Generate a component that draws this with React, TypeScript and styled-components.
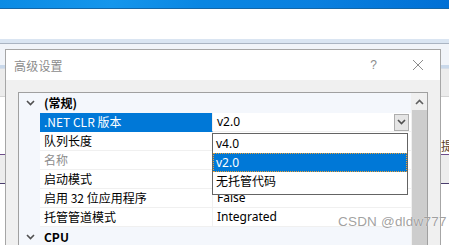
import styled, { createGlobalStyle } from 'styled-components'

const GlobalStyle = createGlobalStyle`
	html, body {
		margin: 0;
		padding: 0;
		background: #ffffff;
	}
	body {
		font-family: 'Noto Sans CJK SC', 'Noto Sans', sans-serif;
		font-size: 12px;
		color: #000;
	}
`

type PropRow = {
	name: string
	value: string
	disabled?: boolean
	selected?: boolean
}

// values of rows 2-4 sit under the open drop list, so they are left blank
const rows: PropRow[] = [
	{ name: '.NET CLR 版本', value: 'v2.0', selected: true },
	{ name: '队列长度', value: '' },
	{ name: '名称', value: '', disabled: true },
	{ name: '启动模式', value: '' },
	{ name: '启用 32 位应用程序', value: 'False' },
	{ name: '托管管道模式', value: 'Integrated' },
]

const options = ['v4.0', 'v2.0', '无托管代码']

function Chevron({ up }: { up?: boolean }) {
	return (
		<svg width='9' height='6' viewBox='0 0 9 6'>
			<polyline
				points={up ? '1,5 4.5,1.5 8,5' : '1,1 4.5,4.5 8,1'}
				fill='none'
				stroke={up ? '#606060' : '#505050'}
				strokeWidth='1.6'
			/>
		</svg>
	)
}

export default function App() {
	return (
		<Screen>
			<GlobalStyle />
			<TaskBar />
			<Ribbon />
			<RibbonEdge />
			<BackLane />
			<BackLine />
			<BackToolbar />
			<BackContent>
				<BackText>提</BackText>
			</BackContent>
			<BackStrip />
			<BackFoot />

			<Dialog>
				<TitleBar>
					<Title>高级设置</Title>
					<TitleButtons>
						<HelpMark>?</HelpMark>
						<svg width='12' height='12' viewBox='0 0 12 12'>
							<path d='M1 1 L11 11 M11 1 L1 11' stroke='#8c8c8c' strokeWidth='1' />
						</svg>
					</TitleButtons>
				</TitleBar>
				<Body>
					<Grid>
						<RowsArea>
							<CategoryRow>
								<Margin>
									<Chevron />
								</Margin>
								<CategoryLabel>(常规)</CategoryLabel>
							</CategoryRow>
							{rows.map((r) => (
								<Row key={r.name}>
									<Margin />
									<NameCell $selected={r.selected} $disabled={r.disabled}>
										{r.name}
									</NameCell>
									<ValueCell>
										{r.selected ? (
											<>
												<ComboText>{r.value}</ComboText>
												<ComboButton>
													<Chevron />
												</ComboButton>
												<DropList>
													{options.map((o) => (
														<DropItem key={o} $active={o === r.value}>
															{o}
														</DropItem>
													))}
												</DropList>
											</>
										) : (
											r.value
										)}
									</ValueCell>
								</Row>
							))}
							<CategoryRow>
								<Margin>
									<Chevron />
								</Margin>
								<CategoryLabel>CPU</CategoryLabel>
							</CategoryRow>
						</RowsArea>
						<ScrollBar>
							<ScrollArrow>
								<Chevron up />
							</ScrollArrow>
							<ScrollThumb />
						</ScrollBar>
					</Grid>
				</Body>
			</Dialog>
			<Watermark>CSDN @dldw777</Watermark>
		</Screen>
	)
}

const Screen = styled.div`
	position: relative;
	width: 449px;
	height: 245px;
	overflow: hidden;
	background: #ffffff;
`
const TaskBar = styled.div`
	height: 8px;
	background: linear-gradient(100deg, #0b8be4 0%, #1596ec 25%, #0a86e2 45%, #0a80df 70%, #0070d5 100%);
	border-bottom: 1px solid #1467a8;
`
const Ribbon = styled.div`
	height: 30px;
	background: #ffffff;
`
const RibbonEdge = styled.div`
	height: 4px;
	background: #dae5f2;
	border-bottom: 1px solid #aab4c2;
`
const BackLane = styled.div`
	height: 21px;
	background: #f1f4f9;
`
const BackLine = styled.div`
	height: 3px;
	background: #c9d8ea;
	border-bottom: 1px solid #d7dee8;
`
const BackToolbar = styled.div`
	height: 27px;
	background: #ececec;
	border-bottom: 1px solid #d4d4d4;
`
const BackContent = styled.div`
	height: 56px;
	background: #ffffff;
	border-bottom: 1px solid #6d4c8a;
	display: flex;
	justify-content: flex-end;
	align-items: flex-end;
	padding-bottom: 1px;
`
const BackText = styled.span`
	font-size: 12px;
	line-height: 14px;
	color: #5a3a1a;
	margin-right: -4px;
`
const BackStrip = styled.div`
	height: 28px;
	background: #ededed;
	border-bottom: 1px solid #4b3e6e;
`
const BackFoot = styled.div`
	height: 60px;
	background: #ffffff;
`
const Dialog = styled.div`
	position: absolute;
	left: 5px;
	top: 49px;
	width: 436px;
	height: 210px;
	box-sizing: border-box;
	border: 1px solid #a6a6a6;
	background: #f0f0f0;
	display: flex;
	flex-direction: column;
`
const TitleBar = styled.div`
	height: 30px;
	background: #ffffff;
	display: flex;
	align-items: center;
	justify-content: space-between;
	padding: 0 16px 0 8px;
`
const Title = styled.span`
	font-size: 12px;
	color: #8c8c8c;
	letter-spacing: 0.2px;
`
const TitleButtons = styled.div`
	display: flex;
	align-items: center;
	gap: 35px;
`
const HelpMark = styled.span`
	font-family: 'Liberation Sans', sans-serif;
	font-size: 12px;
	color: #8c8c8c;
`
const Body = styled.div`
	flex: 1;
	padding: 12px 12px 0 12px;
`
const Grid = styled.div`
	width: 410px;
	height: 160px;
	box-sizing: border-box;
	border: 1px solid #a0a0a0;
	border-bottom: none;
	background: #ffffff;
	display: flex;
`
const RowsArea = styled.div`
	flex: 1;
	display: flex;
	flex-direction: column;
`
const CategoryRow = styled.div`
	height: 19px;
	flex: none;
	display: flex;
	align-items: center;
	background: #f4f7fc;
	border-bottom: 1px solid #f4f7fc;
`
const Margin = styled.div`
	width: 21px;
	height: 100%;
	flex: none;
	background: #f4f7fc;
	display: flex;
	align-items: center;
	justify-content: center;
	padding-left: 1px;
	box-sizing: border-box;
`
const CategoryLabel = styled.span`
	padding-left: 4px;
	font-weight: bold;
	font-size: 12px;
`
const Row = styled.div`
	height: 19px;
	flex: none;
	display: flex;
	line-height: 18px;
`
const NameCell = styled.div<{ $selected?: boolean; $disabled?: boolean }>`
	width: 173px;
	flex: none;
	padding-left: 4px;
	box-sizing: border-box;
	border-bottom: 1px solid ${(p) => (p.$selected ? '#0078d7' : '#f0f0f0')};
	border-right: 1px solid #f0f0f0;
	background: ${(p) => (p.$selected ? '#0078d7' : '#ffffff')};
	color: ${(p) => (p.$selected ? '#ffffff' : p.$disabled ? '#8d8d8d' : '#000000')};
	white-space: nowrap;
`
const ValueCell = styled.div`
	position: relative;
	flex: 1;
	display: flex;
	align-items: center;
	padding-left: 4px;
	border-bottom: 1px solid #f0f0f0;
	white-space: nowrap;
	font-family: 'Noto Sans', 'Noto Sans CJK SC', sans-serif;
`
const ComboText = styled.span`
	flex: 1;
`
const ComboButton = styled.div`
	width: 15px;
	height: 17px;
	margin-right: 2px;
	box-sizing: border-box;
	border: 1px solid #adadad;
	background: #e5e5e5;
	display: flex;
	align-items: center;
	justify-content: center;
`
const DropList = styled.div`
	position: absolute;
	left: -1px;
	top: 20px;
	width: 196px;
	height: 62px;
	box-sizing: border-box;
	border: 1px solid #646464;
	background: #ffffff;
	z-index: 2;
`
const DropItem = styled.div<{ $active?: boolean }>`
	height: 19px;
	line-height: 19px;
	padding-left: 3px;
	box-sizing: border-box;
	background: ${(p) => (p.$active ? '#0078d7' : '#ffffff')};
	color: ${(p) => (p.$active ? '#ffffff' : '#000000')};
	outline: ${(p) => (p.$active ? '1px dotted #f0a030' : 'none')};
	outline-offset: -1px;
	font-family: 'Noto Sans', 'Noto Sans CJK SC', sans-serif;
`
const ScrollBar = styled.div`
	width: 16px;
	flex: none;
	background: #f0f0f0;
	display: flex;
	flex-direction: column;
	align-items: center;
`
const ScrollArrow = styled.div`
	height: 17px;
	width: 100%;
	display: flex;
	align-items: center;
	justify-content: center;
`
const ScrollThumb = styled.div`
	flex: 1;
	width: 15px;
	background: #cdcdcd;
`
const Watermark = styled.div`
	position: absolute;
	left: 338px;
	top: 214px;
	font-family: 'Liberation Sans', sans-serif;
	font-size: 13.5px;
	color: rgba(130, 130, 130, 0.75);
	text-shadow: 0 0 1px #ffffff;
	letter-spacing: 0.2px;
`
